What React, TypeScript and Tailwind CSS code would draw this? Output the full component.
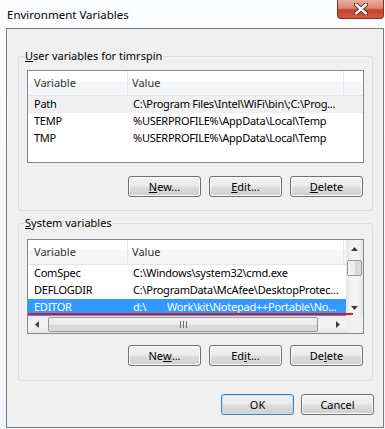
import type { ReactNode } from "react";

type Row = { name: string; value: ReactNode; state?: "gray" | "blue" };

const userRows: Row[] = [
  { name: "Path", value: "C:\\Program Files\\Intel\\WiFi\\bin\\;C:\\Prog...", state: "gray" },
  { name: "TEMP", value: "%USERPROFILE%\\AppData\\Local\\Temp" },
  { name: "TMP", value: "%USERPROFILE%\\AppData\\Local\\Temp" },
];

const systemRows: Row[] = [
  { name: "ComSpec", value: "C:\\Windows\\system32\\cmd.exe" },
  { name: "DEFLOGDIR", value: "C:\\ProgramData\\McAfee\\DesktopProtec..." },
  {
    name: "EDITOR",
    value: (
      <>
        d:\<span className="inline-block w-[21px]" />Work\kit\Notepad++Portable\No...
      </>
    ),
    state: "blue",
  },
];

function Btn({ children, primary }: { children: ReactNode; primary?: boolean }) {
  return (
    <button
      className={`flex h-[21px] w-[73px] items-center justify-center rounded-[3px] border text-[11px] leading-none text-black bg-[linear-gradient(#f2f2f2_0%,#ebebeb_48%,#dddddd_52%,#cfcfcf_100%)] ${
        primary
          ? "border-[#3c7fb1] shadow-[inset_0_0_0_1px_#bfe3f8]"
          : "border-[#707070] shadow-[inset_0_0_0_1px_#fbfbfb]"
      }`}
    >
      {children}
    </button>
  );
}

function Arrow({ dir }: { dir: "up" | "down" | "left" | "right" }) {
  const pts = {
    up: "0,4 3.5,0 7,4",
    down: "0,0 3.5,4 7,0",
    left: "4,0 0,3.5 4,7",
    right: "0,0 4,3.5 0,7",
  }[dir];
  const vertical = dir === "up" || dir === "down";
  return (
    <svg width={vertical ? 7 : 4} height={vertical ? 4 : 7} viewBox={vertical ? "0 0 7 4" : "0 0 4 7"}>
      <polygon points={pts} fill="#3d3d3d" />
    </svg>
  );
}

function Header() {
  return (
    <div className="flex h-[25px] shrink-0 border-b border-[#e5e5e5] bg-[linear-gradient(#ffffff_0%,#ffffff_40%,#f6f7f8_40%,#f4f5f6_100%)] text-[11px] text-[#333]">
      <div className="flex w-[100px] items-center border-r border-[#e3e6ea] pl-[6px]">Variable</div>
      <div className="flex w-[216px] items-center border-r border-[#e3e6ea] pl-[4px]">Value</div>
      <div className="flex-1" />
    </div>
  );
}

function Rows({ rows }: { rows: Row[] }) {
  return (
    <>
      {rows.map((r) => (
        <div
          key={r.name}
          className={`flex h-[17px] shrink-0 items-center whitespace-nowrap text-[11px] tracking-[-0.25px] ${
            r.state === "blue"
              ? "bg-[#3399ff] text-white"
              : r.state === "gray"
                ? "bg-[#f0f0f0] text-black"
                : "text-black"
          }`}
        >
          <div className="w-[101px] pl-[6px]">{r.name}</div>
          <div className="w-[216px] overflow-hidden pl-[4px]">{r.value}</div>
        </div>
      ))}
    </>
  );
}

function UserList() {
  return (
    <div className="flex h-[93px] flex-col border border-[#828790] bg-white">
      <Header />
      <Rows rows={userRows} />
    </div>
  );
}

function SystemList() {
  return (
    <div className="relative flex h-[95px] flex-col border border-[#828790] bg-white">
      <div className="flex min-h-0 flex-1">
        <div className="flex min-w-0 flex-1 flex-col overflow-hidden">
          <Header />
          <Rows rows={systemRows} />
        </div>
        {/* vertical scrollbar */}
        <div className="flex w-[17px] flex-col bg-[linear-gradient(90deg,#e6e6e6,#f3f3f3_30%,#f3f3f3_70%,#e6e6e6)]">
          <div className="flex h-[17px] items-center justify-center">
            <Arrow dir="up" />
          </div>
          <div className="mx-[1px] mt-[3px] h-[16px] rounded-[2px] border border-[#979797] bg-[linear-gradient(90deg,#f2f2f2,#ebebeb_50%,#d6d6d6_51%,#dcdcdc)]" />
          <div className="flex-1" />
          <div className="flex h-[17px] items-center justify-center">
            <Arrow dir="down" />
          </div>
        </div>
      </div>
      {/* horizontal scrollbar */}
      <div className="flex h-[17px] shrink-0">
        <div className="flex flex-1 items-center bg-[linear-gradient(#e6e6e6,#f3f3f3_30%,#f3f3f3_70%,#e6e6e6)]">
          <div className="flex h-full w-[17px] items-center justify-center">
            <Arrow dir="left" />
          </div>
          <div className="ml-[3px] flex h-[15px] w-[270px] items-center justify-center gap-[2px] rounded-[2px] border border-[#979797] bg-[linear-gradient(#f2f2f2,#ebebeb_50%,#d6d6d6_51%,#dcdcdc)]">
            <span className="h-[7px] w-px bg-[#6e6e6e]" />
            <span className="h-[7px] w-px bg-[#6e6e6e]" />
            <span className="h-[7px] w-px bg-[#6e6e6e]" />
          </div>
          <div className="flex-1" />
          <div className="flex h-full w-[17px] items-center justify-center">
            <Arrow dir="right" />
          </div>
        </div>
        <div className="w-[17px] bg-[#f0f0f0]" />
      </div>
      {/* red annotation line */}
      <div className="absolute left-0 top-[73px] h-[2px] w-[325px] bg-[#e4141b]" />
    </div>
  );
}

function Group({
  label,
  children,
  className,
}: {
  label: ReactNode;
  children: ReactNode;
  className: string;
}) {
  return (
    <fieldset className={`mr-[10px] ml-[11px] rounded-[3px] border border-[#d5dfe5] ${className}`}>
      <legend className="ml-[5px] px-[1px] text-[11px] leading-[14px] text-black">{label}</legend>
      {children}
    </fieldset>
  );
}

export default function App() {
  return (
    <div className="h-[429px] w-[385px] overflow-hidden rounded-tl-[6px] bg-[linear-gradient(#fbfcfd,#f1f4f8)] font-['Noto_Sans',sans-serif]">
      {/* title bar */}
      <div className="flex h-[28px] items-start justify-between">
        <div className="pl-[7px] pt-[7px] text-[11.5px] leading-[16px] text-black">Environment Variables</div>
        <div className="mr-[1px] flex h-[19px] w-[47px] items-center justify-center rounded-b-[4px] border border-t-0 border-[#8a2f20] bg-[linear-gradient(#eab0a2_0%,#dd8670_45%,#c8422a_55%,#d45a3e_100%)]">
          <svg width="16" height="12" viewBox="0 0 16 12">
            <path d="M3 1.5 L13 10.5 M13 1.5 L3 10.5" stroke="#5a1e14" strokeWidth="4.2" strokeLinecap="round" />
            <path d="M3 1.5 L13 10.5 M13 1.5 L3 10.5" stroke="#ffffff" strokeWidth="2.4" strokeLinecap="round" />
          </svg>
        </div>
      </div>

      {/* client area */}
      <div className="ml-[6px] mr-[1px] flex h-[400px] flex-col border border-[#7a7a7a] bg-[#f0f0f0]">
        <Group
          className="mt-[20px]"
          label={
            <>
              <u>U</u>ser variables for timrspin
            </>
          }
        >
          <div className="px-[8px] pb-[13px] pt-[7px]">
            <UserList />
            <div className="mt-[13px] flex justify-end gap-[8px] pr-[1px]">
              <Btn>
                <u>N</u>ew...
              </Btn>
              <Btn>
                <u>E</u>dit...
              </Btn>
              <Btn>
                <u>D</u>elete
              </Btn>
            </div>
          </div>
        </Group>

        <Group
          className="mt-[5px]"
          label={
            <>
              <u>S</u>ystem variables
            </>
          }
        >
          <div className="px-[8px] pb-[14px] pt-[9px]">
            <SystemList />
            <div className="mt-[11px] flex justify-end gap-[8px] pr-[1px]">
              <Btn>
                Ne<u>w</u>...
              </Btn>
              <Btn>
                Ed<u>i</u>t...
              </Btn>
              <Btn>
                De<u>l</u>ete
              </Btn>
            </div>
          </div>
        </Group>

        <div className="mr-[9px] mt-[13px] flex justify-end gap-[7px]">
          <Btn primary>OK</Btn>
          <Btn>Cancel</Btn>
        </div>
      </div>
    </div>
  );
}
